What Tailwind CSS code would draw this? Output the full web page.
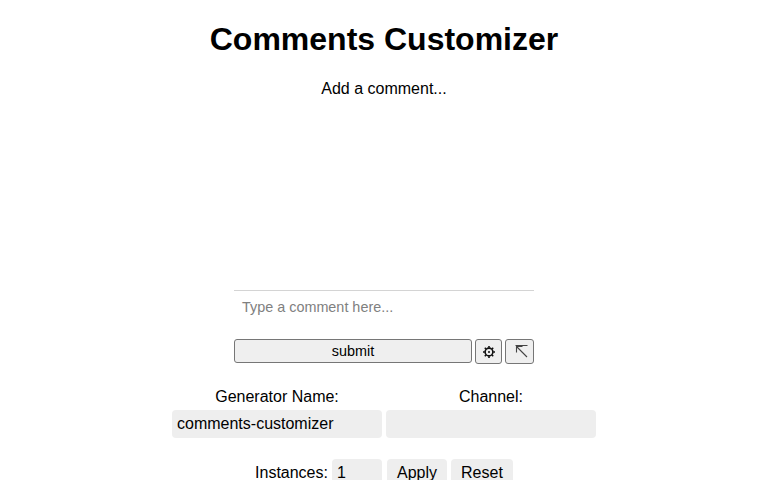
<!DOCTYPE html>
<html lang="en">
<head>
    <meta charset="UTF-8">
    <meta name="viewport" content="width=device-width, initial-scale=1.0">
    <title>Comments Customizer</title>
    <script src="https://cdn.jsdelivr.net/npm/@tailwindcss/browser@4"></script>
</head>
<body class="bg-white h-screen overflow-hidden text-black font-['Liberation_Sans',Arial,sans-serif]">
<div class="flex flex-col items-center">
    <!-- header -->
    <h1 class="mt-[21px] text-[32px] leading-[37px] font-bold text-center">Comments Customizer</h1>

    <!-- comment box -->
    <div class="mt-[21px] w-[300px] flex flex-col">
        <div class="h-[212px] border-b border-[#d4d4d4] text-center leading-[18px] pt-[1px]">Add a comment...</div>
        <textarea placeholder="Type a comment here..." rows="2" class="w-full h-[48px] px-[8px] py-[8px] text-[14.4px] leading-[17px] resize-none outline-none placeholder:text-[#808080]"></textarea>
        <div class="flex gap-[3px]">
            <button class="flex-1 h-[24px] bg-[#efefef] border border-[#767676] rounded-[3px] text-[14.4px] leading-[17px]">submit</button>
            <button class="w-[27px] h-[25px] bg-[#efefef] border border-[#767676] rounded-[3px] flex items-center justify-center">
                <svg width="14" height="14" viewBox="0 0 14 14" fill="none" stroke="#111" stroke-width="1.6"><circle cx="7" cy="7" r="3.9"/><circle cx="7" cy="7" r="1" fill="#111" stroke="none"/><path d="M7 1v1.8M7 11.2V13M1 7h1.8M11.2 7H13M2.8 2.8l1.2 1.2M10 10l1.2 1.2M11.2 2.8L10 4M4 10l-1.2 1.2"/></svg>
            </button>
            <button class="w-[29px] h-[25px] bg-[#efefef] border border-[#767676] rounded-[3px] flex items-center justify-center">
                <svg width="16" height="16" viewBox="0 0 16 16" fill="none" stroke="#444" stroke-width="1.1"><path d="M3.5 1.5h12M4.5 2.5L15 13M4.5 2v6.5M4 2.5h6.5"/></svg>
            </button>
        </div>
    </div>

    <!-- generator settings -->
    <div class="mt-[24px] flex gap-[4px]">
        <div class="w-[210px] flex flex-col items-center">
            <label class="leading-[18px]">Generator Name:</label>
            <input value="comments-customizer" class="mt-[4px] w-full h-[28px] px-[5px] bg-[#eeeeee] rounded-[4px] outline-none">
        </div>
        <div class="w-[210px] flex flex-col items-center">
            <label class="leading-[18px]">Channel:</label>
            <input class="mt-[4px] w-full h-[28px] px-[5px] bg-[#eeeeee] rounded-[4px] outline-none">
        </div>
    </div>

    <!-- instances -->
    <div class="mt-[21px] flex items-center gap-[4px]">
        <label class="leading-[18px]">Instances:</label>
        <input value="1" class="w-[50px] h-[28px] px-[5px] bg-[#eeeeee] rounded-[4px] outline-none">
        <button class="ml-[1px] w-[60px] h-[28px] bg-[#eeeeee] rounded-[4px]">Apply</button>
        <button class="w-[62px] h-[28px] bg-[#eeeeee] rounded-[4px]">Reset</button>
    </div>
</div>
</body>
</html>
